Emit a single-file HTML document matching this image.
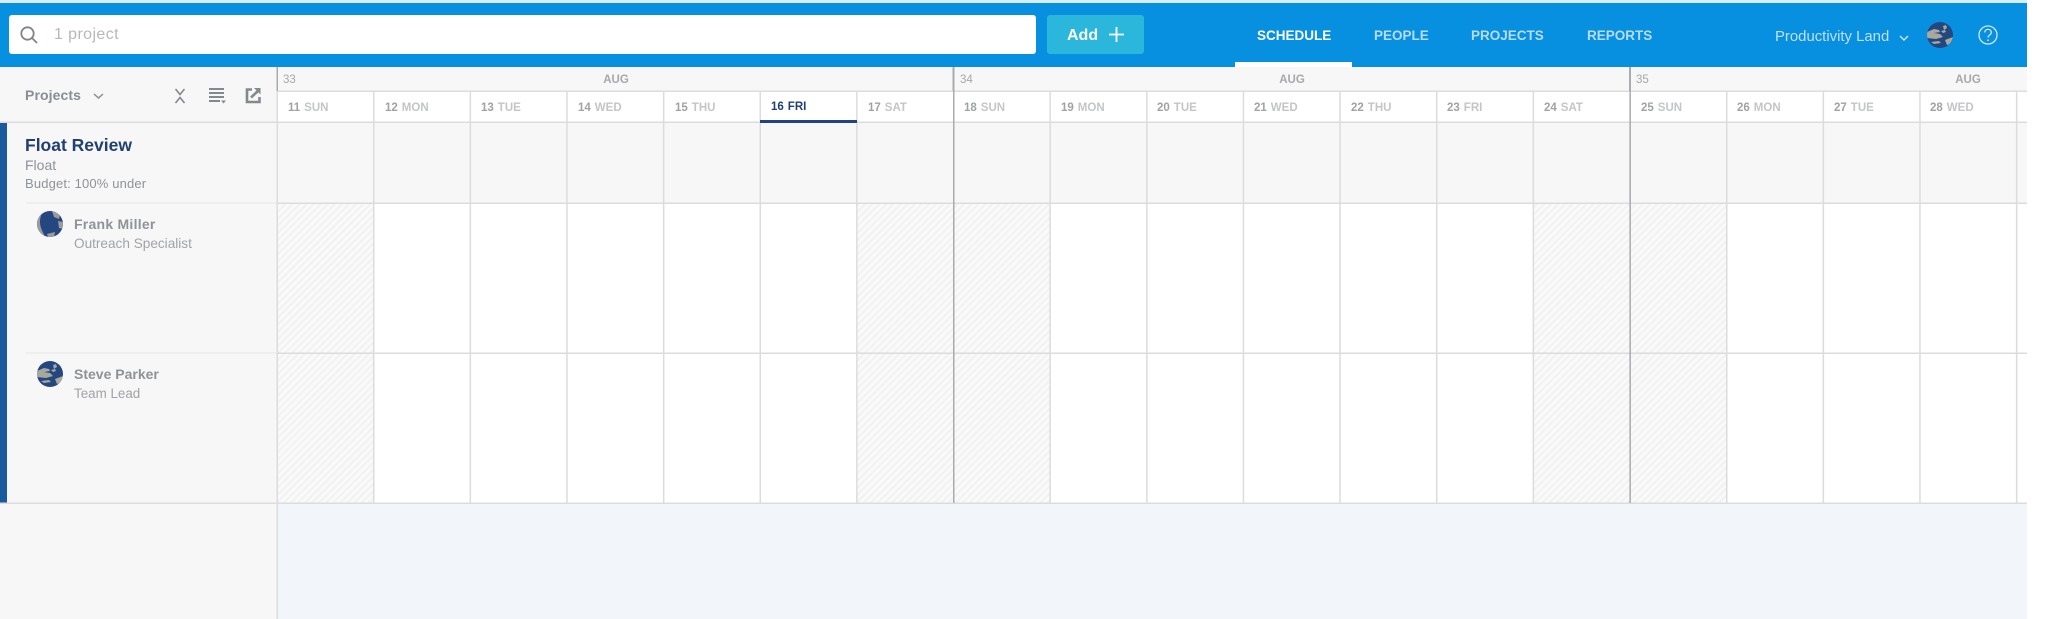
<!DOCTYPE html>
<html lang="en">
<head>
<meta charset="utf-8">
<title>Schedule</title>
<style>
html,body{margin:0;padding:0;background:#fff}
body{width:2048px;height:619px;position:relative;overflow:hidden;font-family:"Liberation Sans",sans-serif}
.t{position:absolute;white-space:nowrap;line-height:20px;height:20px}
.nav{top:26px;font-size:13.5px;font-weight:700;color:#b9dcf6}
.d{top:98px;font-size:11.5px;font-weight:700;color:#c3c5c8;margin-left:-1px}
.d b{color:#a0a2a6;margin-right:4px}
.w{top:70px;font-size:11.5px;color:#a6a8ab}
.a{top:70px;font-size:11.5px;font-weight:700;color:#a6a8ab;width:60px;text-align:center}
svg.bg{position:absolute;left:0;top:0}
</style>
</head>
<body>
<svg class="bg" width="2048" height="619" viewBox="0 0 2048 619">
<defs>
<pattern id="h" width="5" height="5" patternUnits="userSpaceOnUse" patternTransform="rotate(45)">
<rect width="5" height="5" fill="#fafafa"/>
<rect width="2.200" height="5" fill="#f2f2f2"/>
</pattern>
</defs>
<rect x="0" y="3" width="2027" height="64" fill="#078fe0"/>
<rect x="0" y="0" width="2027" height="3" fill="#d8eefa"/>
<rect x="0" y="67" width="2027" height="552" fill="#f7f7f7"/>
<rect x="277" y="503" width="1750" height="116" fill="#f2f5f9"/>
<rect x="277" y="91" width="1750" height="31" fill="#fff"/>
<rect x="277" y="203" width="1750" height="300" fill="#fff"/>
<rect x="277" y="122" width="1750" height="81" fill="#f7f7f7"/>
<g fill="url(#h)">
<rect x="277" y="203" width="96.6" height="300"/>
<rect x="856.8" y="203" width="96.7" height="300"/>
<rect x="953.5" y="203" width="96.6" height="300"/>
<rect x="1533.3" y="203" width="96.7" height="300"/>
<rect x="1630" y="203" width="96.6" height="300"/>
</g>
<rect x="0" y="122" width="7" height="381" fill="#1a5b9e"/>
<g fill="#dcdcde">
<rect x="277" y="90.5" width="1750" height="1.5"/>
<rect x="0" y="121.5" width="2027" height="1.5"/>
<rect x="277" y="202.5" width="1750" height="1.5"/>
<rect x="277" y="352.5" width="1750" height="1.5"/>
<rect x="0" y="502.5" width="2027" height="1.5"/>
<rect x="26" y="202.5" width="251" height="1" fill="#e4e4e4"/>
<rect x="26" y="352.5" width="251" height="1" fill="#e4e4e4"/>
<rect x="276.5" y="67" width="1.5" height="552"/>
<rect x="373" y="91" width="1.5" height="412"/>
<rect x="469.6" y="91" width="1.5" height="412"/>
<rect x="566.2" y="91" width="1.5" height="412"/>
<rect x="662.9" y="91" width="1.5" height="412"/>
<rect x="759.5" y="91" width="1.5" height="412"/>
<rect x="856.1" y="91" width="1.5" height="412"/>
<rect x="1049.4" y="91" width="1.5" height="412"/>
<rect x="1146.1" y="91" width="1.5" height="412"/>
<rect x="1242.7" y="91" width="1.5" height="412"/>
<rect x="1339.3" y="91" width="1.5" height="412"/>
<rect x="1436" y="91" width="1.5" height="412"/>
<rect x="1532.6" y="91" width="1.5" height="412"/>
<rect x="1726" y="91" width="1.5" height="412"/>
<rect x="1822.6" y="91" width="1.5" height="412"/>
<rect x="1919.2" y="91" width="1.5" height="412"/>
<rect x="2015.9" y="91" width="1.5" height="412"/>
</g>
<g fill="#a9abae">
<rect x="276.5" y="67" width="1.5" height="24"/>
<rect x="952.5" y="67" width="2" height="24"/>
<rect x="1629" y="67" width="2" height="24"/>
<rect x="953" y="91" width="1.5" height="412"/>
<rect x="1629.4" y="91" width="1.5" height="412"/>
</g>
<rect x="760" y="120" width="97" height="3" fill="#22437f"/>
<rect x="9" y="15" width="1027" height="39" rx="3" fill="#fff"/>
<rect x="1047" y="15" width="97" height="39" rx="3" fill="#2bb6dc"/>
<rect x="1235" y="62" width="117" height="5" fill="#fff"/>
<g fill="none" stroke="#808488" stroke-width="1.8">
<circle cx="27.5" cy="33.5" r="6.2"/>
<path d="M32 38l5 5"/>
</g>
<path d="M1109 34.500h15M1116.500 27v15" stroke="#fff" stroke-width="1.8" fill="none"/>
<path d="M1900 36l4 4 4-4" stroke="#cfe8fa" stroke-width="1.400" fill="none"/>
<circle cx="1988" cy="35" r="9" fill="none" stroke="#cfe8fa" stroke-width="1.300"/>
<path d="M94 94l4.500 4 4.500-4" stroke="#8a8d91" stroke-width="1.500" fill="none"/>
<g stroke="#85888c" stroke-width="1.600" fill="none">
<path d="M175.500 89l4.500 5.500 4.500-5.500"/>
<path d="M175.500 103l4.500-5.500 4.500 5.500"/>
</g>
<g fill="#85888c">
<rect x="209" y="88" width="15" height="2"/>
<rect x="209" y="92" width="15" height="2"/>
<rect x="209" y="96" width="15" height="2"/>
<rect x="209" y="100" width="11" height="2"/>
<path d="M221 100.500h5l-2.500 3z"/>
</g>
<g stroke="#85888c" stroke-width="2.600" fill="none">
<path d="M252 89.500h-5v12.500h12.500v-5"/>
<path d="M251 97.500l7.500-7"/>
</g>
<path d="M254 88h6.500v6.500z" fill="#85888c"/>
<defs>
<clipPath id="c1"><circle cx="50" cy="224" r="13"/></clipPath>
<clipPath id="c2"><circle cx="50" cy="374" r="13"/></clipPath>
<clipPath id="c3"><circle cx="1940" cy="35" r="13"/></clipPath>
</defs>
<g clip-path="url(#c1)">
<rect x="37" y="211" width="26" height="26" fill="#24477f"/>
<path d="M37 211h7c-3 3-4 7-4 11 0 6 3 10 5 15h-8zM52 211c3 1 6 2 8 4l-1 4-5-2zM58 221l5 1v7l-4-1zM47 234l8-2-1 5h-6z" fill="#9a9c9c"/>
</g>
<g clip-path="url(#c2)">
<rect x="37" y="361" width="26" height="26" fill="#24477f"/>
<path d="M37 371l7-3 5 1 1 2-6 1 6 1 3 3-7 2-9-1zM41 381l8-1 2 2-7 1zM53 365l3-1 1 3-3 2zM51 370l4-1 1 2-3 1zM55 379l8-3v6l-6 2z" fill="#a9a89f"/>
</g>
<g clip-path="url(#c3)">
<rect x="1927" y="22" width="26" height="26" fill="#24477f"/>
<path d="M1927 32l7-3 5 1 1 2-6 1 6 1 3 3-7 2-9-1zM1931 42l8-1 2 2-7 1zM1943 26l3-1 1 3-3 2zM1941 31l4-1 1 2-3 1zM1945 40l8-3v6l-6 2z" fill="#a9a89f"/>
</g>
<path d="M1984.800 32.500c0-4.200 6.500-4.200 6.500 0 0 2.500-3.200 2.500-3.200 5" fill="none" stroke="#cfe8fa" stroke-width="1.300"/>
<circle cx="1988" cy="40.300" r="0.900" fill="#cfe8fa"/>
</svg>

<div class="t" style="left:54px;top:25px;font-size:16px;letter-spacing:.4px;color:#b6b8bb">1 project</div>
<div class="t" style="left:1067px;top:26px;font-size:16px;font-weight:700;color:#fff">Add</div>
<div class="t nav" style="left:1257px;color:#fff">SCHEDULE</div>
<div class="t nav" style="left:1374px">PEOPLE</div>
<div class="t nav" style="left:1471px">PROJECTS</div>
<div class="t nav" style="left:1587px">REPORTS</div>
<div class="t" style="left:1775px;top:27px;font-size:14.900px;color:#bfe0f8">Productivity Land</div>

<div class="t" style="left:25px;top:85px;font-size:14px;font-weight:700;letter-spacing:.1px;color:#8a8d91">Projects</div>

<div class="t" style="left:25px;top:135px;font-size:17.500px;font-weight:700;color:#22406f">Float Review</div>
<div class="t" style="left:25px;top:155px;font-size:14px;color:#8f9296">Float</div>
<div class="t" style="left:25px;top:174px;font-size:13px;letter-spacing:.15px;color:#8f9296">Budget: 100% under</div>

<div class="t" style="left:74px;top:214px;font-size:14px;font-weight:700;letter-spacing:.25px;color:#8f9296">Frank Miller</div>
<div class="t" style="left:74px;top:234px;font-size:13.600px;color:#a0a3a6">Outreach Specialist</div>
<div class="t" style="left:74px;top:364px;font-size:14px;font-weight:700;color:#8f9296">Steve Parker</div>
<div class="t" style="left:74px;top:384px;font-size:13.400px;color:#a0a3a6">Team Lead</div>

<div class="t w" style="left:283px">33</div>
<div class="t a" style="left:586px">AUG</div>
<div class="t w" style="left:960px">34</div>
<div class="t a" style="left:1262px">AUG</div>
<div class="t w" style="left:1636px">35</div>
<div class="t a" style="left:1938px">AUG</div>

<div class="t d" style="left:289px"><b>11</b>SUN</div>
<div class="t d" style="left:386px"><b>12</b>MON</div>
<div class="t d" style="left:482px"><b>13</b>TUE</div>
<div class="t d" style="left:579px"><b>14</b>WED</div>
<div class="t d" style="left:676px"><b>15</b>THU</div>
<div class="t d" style="left:772px;top:97px;color:#22406f"><b style="color:#22406f">16</b>FRI</div>
<div class="t d" style="left:869px"><b>17</b>SAT</div>
<div class="t d" style="left:965px"><b>18</b>SUN</div>
<div class="t d" style="left:1062px"><b>19</b>MON</div>
<div class="t d" style="left:1158px"><b>20</b>TUE</div>
<div class="t d" style="left:1255px"><b>21</b>WED</div>
<div class="t d" style="left:1352px"><b>22</b>THU</div>
<div class="t d" style="left:1448px"><b>23</b>FRI</div>
<div class="t d" style="left:1545px"><b>24</b>SAT</div>
<div class="t d" style="left:1642px"><b>25</b>SUN</div>
<div class="t d" style="left:1738px"><b>26</b>MON</div>
<div class="t d" style="left:1835px"><b>27</b>TUE</div>
<div class="t d" style="left:1931px"><b>28</b>WED</div>
</body>
</html>
